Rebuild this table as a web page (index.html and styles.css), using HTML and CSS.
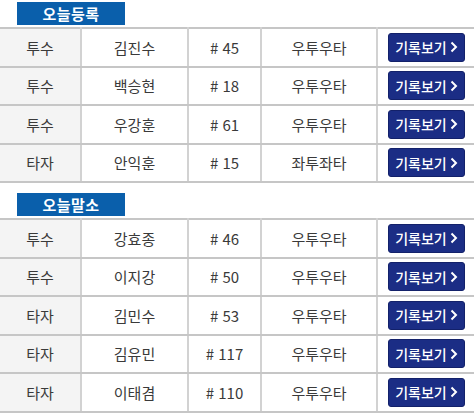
FILE: index.html
```html
<!DOCTYPE html>
<html lang="ko">
<head>
<meta charset="utf-8">
<link rel="stylesheet" href="styles.css">
</head>
<body>
<div class="section">
  <div class="title">오늘등록</div>
  <table class="roster">
    <colgroup><col class="c1"><col class="c2"><col class="c3"><col class="c4"><col class="c5"></colgroup>
    <tr><td class="pos">투수</td><td>김진수</td><td># 45</td><td>우투우타</td><td class="act"><a class="btn">기록보기<svg class="chev" viewBox="0 0 8 12"><polyline points="1.5,1.5 6,6 1.5,10.5"/></svg></a></td></tr>
    <tr><td class="pos">투수</td><td>백승현</td><td># 18</td><td>우투우타</td><td class="act"><a class="btn">기록보기<svg class="chev" viewBox="0 0 8 12"><polyline points="1.5,1.5 6,6 1.5,10.5"/></svg></a></td></tr>
    <tr><td class="pos">투수</td><td>우강훈</td><td># 61</td><td>우투우타</td><td class="act"><a class="btn">기록보기<svg class="chev" viewBox="0 0 8 12"><polyline points="1.5,1.5 6,6 1.5,10.5"/></svg></a></td></tr>
    <tr><td class="pos">타자</td><td>안익훈</td><td># 15</td><td>좌투좌타</td><td class="act"><a class="btn">기록보기<svg class="chev" viewBox="0 0 8 12"><polyline points="1.5,1.5 6,6 1.5,10.5"/></svg></a></td></tr>
  </table>
</div>
<div class="section second">
  <div class="title">오늘말소</div>
  <table class="roster">
    <colgroup><col class="c1"><col class="c2"><col class="c3"><col class="c4"><col class="c5"></colgroup>
    <tr><td class="pos">투수</td><td>강효종</td><td># 46</td><td>우투우타</td><td class="act"><a class="btn">기록보기<svg class="chev" viewBox="0 0 8 12"><polyline points="1.5,1.5 6,6 1.5,10.5"/></svg></a></td></tr>
    <tr><td class="pos">투수</td><td>이지강</td><td># 50</td><td>우투우타</td><td class="act"><a class="btn">기록보기<svg class="chev" viewBox="0 0 8 12"><polyline points="1.5,1.5 6,6 1.5,10.5"/></svg></a></td></tr>
    <tr><td class="pos">타자</td><td>김민수</td><td># 53</td><td>우투우타</td><td class="act"><a class="btn">기록보기<svg class="chev" viewBox="0 0 8 12"><polyline points="1.5,1.5 6,6 1.5,10.5"/></svg></a></td></tr>
    <tr><td class="pos">타자</td><td>김유민</td><td># 117</td><td>우투우타</td><td class="act"><a class="btn">기록보기<svg class="chev" viewBox="0 0 8 12"><polyline points="1.5,1.5 6,6 1.5,10.5"/></svg></a></td></tr>
    <tr><td class="pos">타자</td><td>이태겸</td><td># 110</td><td>우투우타</td><td class="act"><a class="btn">기록보기<svg class="chev" viewBox="0 0 8 12"><polyline points="1.5,1.5 6,6 1.5,10.5"/></svg></a></td></tr>
  </table>
</div>
</body>
</html>
```
FILE: styles.css
```css
html, body {
  margin: 0;
  padding: 0;
  background: #ffffff;
}
body {
  font-family: "Noto Sans CJK KR", "Noto Sans", sans-serif;
  color: #333333;
  width: 474px;
}
.section {
  padding-top: 2px;
}
.section.second {
  padding-top: 10px;
}
.title {
  margin-left: 17px;
  width: 108px;
  height: 23px;
  background: #0a5fab;
  color: #ffffff;
  font-size: 15px;
  font-weight: 700;
  line-height: 23px;
  text-align: center;
  letter-spacing: 0.5px;
  margin-bottom: 2px;
}
.roster {
  width: 474px;
  border-collapse: collapse;
  table-layout: fixed;
  border-top: 2px solid #c6c6c6;
}
.c1 { width: 81px; }
.c2 { width: 107px; }
.c3 { width: 73px; }
.c4 { width: 116px; }
.c5 { width: 97px; }
.roster td {
  height: 36.5px;
  padding: 0;
  text-align: center;
  font-size: 15px;
  color: #3a3a3a;
  border-bottom: 2px solid #c6c6c6;
  border-left: 2px solid #d2d2d2;
}
.roster td:first-child {
  border-left: none;
}
.roster td.pos {
  background: #f4f4f4;
}
.roster td.act {
  text-align: left;
  padding-left: 10px;
}
.btn {
  display: inline-flex;
  align-items: center;
  justify-content: center;
  gap: 3px;
  width: 77px;
  height: 29px;
  box-sizing: border-box;
  background: #1b2d85;
  border: 1px solid #13216a;
  border-radius: 3px;
  color: #ffffff;
  font-size: 14px;
  font-weight: 500;
  vertical-align: middle;
}
.chev {
  width: 8px;
  height: 12px;
  fill: none;
  stroke: #ffffff;
  stroke-width: 2;
}
```
